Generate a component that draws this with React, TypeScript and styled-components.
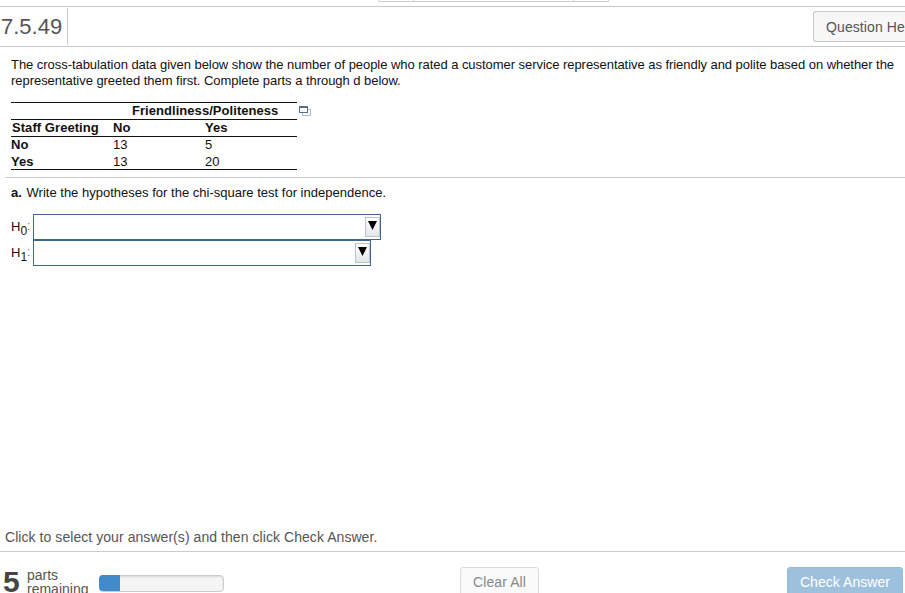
import React from "react";
import styled, { createGlobalStyle } from "styled-components";

const GlobalStyle = createGlobalStyle`
  * { box-sizing: border-box; }
  html, body { margin: 0; overflow: hidden; background: #fff; }
  body { font-family: "Liberation Sans", Arial, sans-serif; font-size: 13px; color: #111; }
`;

const Page = styled.div`
  display: flex;
  flex-direction: column;
  width: 905px;
  height: 593px;
  overflow: hidden;
`;

const TopStrip = styled.div`
  flex: none;
  height: 6px;
  padding-left: 378px;
`;

const Pager = styled.div`
  display: flex;
  justify-content: space-between;
  width: 231px;
  height: 2px;
  padding: 0 34px;
  border: 1px solid #cdcdcd;
  border-top: 0;
  border-radius: 0 0 4px 4px;
`;

const PagerTick = styled.span`
  width: 1px;
  height: 2px;
  background: #cdcdcd;
`;

const Header = styled.header`
  flex: none;
  display: flex;
  justify-content: space-between;
  height: 41px;
  border-top: 1px solid #c6cacf;
  border-bottom: 1px solid #c6cacf;
`;

const ExerciseNumber = styled.div`
  width: 68px;
  height: 37px;
  margin-top: 1px;
  padding-left: 1px;
  border-right: 1px solid #c9cdd2;
  color: #555;
  font-size: 22px;
  line-height: 37px;
  white-space: nowrap;
`;

const HelpButton = styled.button`
  width: 92px;
  height: 31px;
  margin-top: 4px;
  padding: 0 0 0 12px;
  border: 1px solid #c8c8c8;
  border-right: 0;
  border-radius: 3px 0 0 3px;
  background: #f7f7f7;
  color: #555;
  font: 14px/30px "Liberation Sans", Arial, sans-serif;
  letter-spacing: 0.1px;
  text-align: left;
  white-space: nowrap;
  overflow: hidden;
`;

const Content = styled.main`
  flex: 1;
  min-height: 0;
`;

const Problem = styled.div`
  margin-left: 5px;
  height: 131px;
  padding: 10px 0 0 6px;
  border-bottom: 1px solid #c9cedb;
`;

const Line = styled.div<{ $spacing: number }>`
  height: 16px;
  line-height: 16px;
  letter-spacing: ${(p) => p.$spacing}px;
  white-space: nowrap;
`;

const PartLetter = styled.b`
  margin-right: 1px;
`;

const TableRow = styled.div`
  display: flex;
  gap: 2px;
  margin-top: 13px;
`;

const Table = styled.div`
  width: 286px;
  border-top: 1px solid #111;
  border-bottom: 1px solid #111;
`;

const Row = styled.div<{ $height: number; $ruled?: boolean; $bold?: boolean }>`
  display: grid;
  grid-template-columns: 102px 92px 1fr;
  height: ${(p) => p.$height}px;
  line-height: 16px;
  border-bottom: ${(p) => (p.$ruled ? "1px solid #111" : "0")};
  font-weight: ${(p) => (p.$bold ? 700 : 400)};
`;

const RowLabel = styled.span<{ $inset?: number }>`
  padding-left: ${(p) => p.$inset ?? 0}px;
  font-weight: 700;
  letter-spacing: 0.06px;
  white-space: nowrap;
`;

const GroupLabel = styled.span`
  grid-column: 1 / -1;
  padding-left: 121px;
  letter-spacing: 0.05px;
`;

const CopyIcon = styled.svg`
  margin-top: 4px;
`;

const Question = styled.section`
  padding: 7px 0 0 11px;
`;

const Hypotheses = styled.div`
  margin-top: 13px;
`;

const Hypothesis = styled.div`
  display: flex;
  height: 26px;
`;

const Symbol = styled.span`
  display: flex;
  width: 22px;
  font-size: 13px;
  line-height: 25px;
`;

const Subscript = styled.span`
  font-size: 12px;
  line-height: 35px;
`;

const Colon = styled.span`
  color: #777;
  font-size: 12px;
`;

const Select = styled.div<{ $width: number }>`
  display: flex;
  justify-content: flex-end;
  width: ${(p) => p.$width}px;
  height: 26px;
  padding: 2px 0 0;
  border: 1px solid #3f6796;
`;

const Arrow = styled.span`
  display: flex;
  justify-content: center;
  width: 15px;
  height: 20px;
  padding-top: 3px;
  border: 1px solid #bcc2cd;
  background: linear-gradient(#fff, #e4e6ea);
`;

const Instruction = styled.div`
  flex: none;
  height: 23px;
  padding-left: 5px;
  color: #555;
  font-size: 14px;
  line-height: 18px;
  letter-spacing: 0.06px;
`;

const Footer = styled.footer`
  flex: none;
  display: flex;
  align-items: flex-start;
  height: 42px;
  border-top: 1px solid #c9cccf;
  overflow: hidden;
`;

const PartCount = styled.strong`
  width: 27px;
  padding: 15px 0 0 3px;
  color: #444;
  font-size: 30px;
  line-height: 30px;
`;

const PartText = styled.div`
  width: 72px;
  padding-top: 16px;
  color: #555;
  font-size: 14px;
  line-height: 14px;
`;

const Progress = styled.div`
  width: 125px;
  height: 17px;
  margin-top: 23px;
  border: 1px solid #ccc;
  border-radius: 4px;
  background: #f5f5f5;
  box-shadow: inset 0 1px 2px rgba(0, 0, 0, 0.12);
`;

const ProgressFill = styled.div`
  width: 21px;
  height: 16px;
  margin: -1px 0 0 -1px;
  border-radius: 4px 0 0 4px;
  background: #428bca;
`;

const FooterButton = styled.button<{ $primary?: boolean }>`
  width: ${(p) => (p.$primary ? 116 : 79)}px;
  height: 32px;
  margin: 15px 0 0 ${(p) => (p.$primary ? 248 : 236)}px;
  padding: 0;
  border: 1px solid ${(p) => (p.$primary ? "#97bcda" : "#dcdcdc")};
  border-radius: 3px;
  background: ${(p) => (p.$primary ? "#9dc0dd" : "#fafafa")};
  color: ${(p) => (p.$primary ? "#fff" : "#888")};
  font: 14px/27px "Liberation Sans", Arial, sans-serif;
  letter-spacing: ${(p) => (p.$primary ? 0.05 : 0.1)}px;
`;

const ButtonLabel = styled.span`
  display: block;
  height: 30px;
  line-height: 28px;
`;

const hypotheses = [
  { index: "0", width: 348 },
  { index: "1", width: 338 },
];

export default function App() {
  return (
    <Page>
      <GlobalStyle />
      <TopStrip>
        <Pager>
          <PagerTick />
          <PagerTick />
        </Pager>
      </TopStrip>
      <Header>
        <ExerciseNumber>7.5.49</ExerciseNumber>
        <HelpButton>Question Help</HelpButton>
      </Header>
      <Content>
        <Problem>
          <Line $spacing={-0.048}>
            The cross-tabulation data given below show the number of people who rated a customer service representative as friendly and polite based on whether the
          </Line>
          <Line $spacing={-0.04}>representative greeted them first. Complete parts a through d below.</Line>
          <TableRow>
            <Table>
              <Row $height={17} $ruled $bold>
                <GroupLabel>Friendliness/Politeness</GroupLabel>
              </Row>
              <Row $height={17} $ruled $bold>
                <RowLabel $inset={1}>Staff Greeting</RowLabel>
                <span>No</span>
                <span>Yes</span>
              </Row>
              <Row $height={17}>
                <RowLabel>No</RowLabel>
                <span>13</span>
                <span>5</span>
              </Row>
              <Row $height={15}>
                <RowLabel>Yes</RowLabel>
                <span>13</span>
                <span>20</span>
              </Row>
            </Table>
            <CopyIcon width="12" height="10" viewBox="0 0 12 10" fill="none">
              <path d="M3.5 5.5V9.5H11.5V3.5H7.5" stroke="#a9bad0" />
              <rect x="0.5" y="0.5" width="8" height="6" fill="#fff" stroke="#56718f" />
              <path d="M0 1H9" stroke="#56718f" strokeWidth="2" />
            </CopyIcon>
          </TableRow>
        </Problem>
        <Question>
          <Line $spacing={0.01}>
            <PartLetter>a.</PartLetter> Write the hypotheses for the chi-square test for independence.
          </Line>
          <Hypotheses>
            {hypotheses.map((h) => (
              <Hypothesis key={h.index}>
                <Symbol>
                  H<Subscript>{h.index}</Subscript>
                  <Colon>:</Colon>
                </Symbol>
                <Select $width={h.width}>
                  <Arrow>
                    <svg width="9" height="9" viewBox="0 0 9 9">
                      <path d="M0 0H9L4.5 9Z" fill="#000" />
                    </svg>
                  </Arrow>
                </Select>
              </Hypothesis>
            ))}
          </Hypotheses>
        </Question>
      </Content>
      <Instruction>Click to select your answer(s) and then click Check Answer.</Instruction>
      <Footer>
        <PartCount>5</PartCount>
        <PartText>
          parts
          <br />
          remaining
        </PartText>
        <Progress>
          <ProgressFill />
        </Progress>
        <FooterButton>
          <ButtonLabel>Clear All</ButtonLabel>
        </FooterButton>
        <FooterButton $primary>
          <ButtonLabel>Check Answer</ButtonLabel>
        </FooterButton>
      </Footer>
    </Page>
  );
}
